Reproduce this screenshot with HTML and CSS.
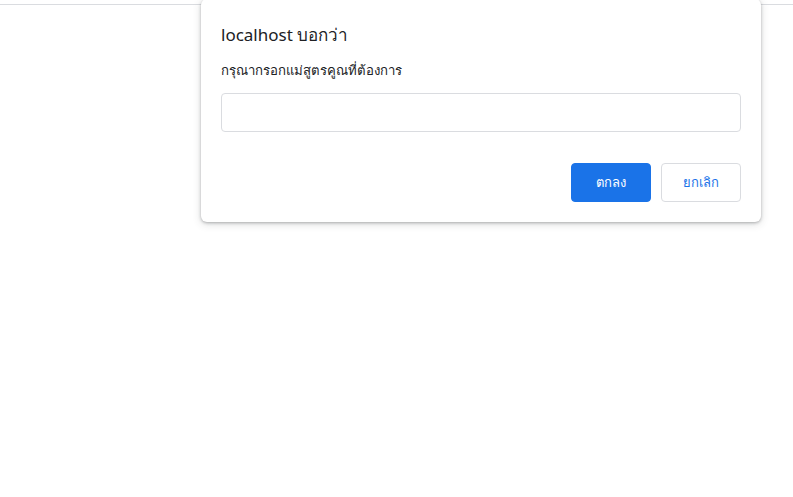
FILE: index.html
```html
<!DOCTYPE html>
<html lang="th">
<head>
<meta charset="utf-8">
<title>localhost</title>
<link rel="stylesheet" href="styles.css">
</head>
<body>
<div class="topbar"></div>
<div class="dialog" role="dialog">
  <div class="title">localhost บอกว่า</div>
  <div class="message">กรุณากรอกแม่สูตรคูณที่ต้องการ</div>
  <input class="field" type="text">
  <div class="actions">
    <button class="btn btn-primary">ตกลง</button>
    <button class="btn btn-secondary">ยกเลิก</button>
  </div>
</div>
</body>
</html>
```

FILE: styles.css
```css
html, body {
  margin: 0;
  padding: 0;
  background: #ffffff;
  font-family: "Noto Sans", "Open Sans", "DejaVu Sans", sans-serif;
  color: #202124;
}

.topbar {
  height: 4px;
  border-bottom: 1px solid #dadce0;
}

.dialog {
  position: absolute;
  left: 201px;
  top: -1px;
  width: 560px;
  height: 223px;
  box-sizing: border-box;
  background: #ffffff;
  border-radius: 6px;
  box-shadow: 0 1px 3px rgba(60, 64, 67, 0.35), 0 2px 8px rgba(60, 64, 67, 0.18);
  padding: 20px 20px 20px 20px;
  display: flex;
  flex-direction: column;
}

.title {
  font-size: 17px;
  line-height: 30px;
  margin-top: 1px;
  color: #202124;
}

.message {
  font-size: 13.2px;
  line-height: 20px;
  margin-top: 10px;
  color: #202124;
}

.field {
  margin-top: 13px;
  height: 39px;
  box-sizing: border-box;
  border: 1px solid #dadce0;
  border-radius: 4px;
  outline: none;
  background: #fff;
  padding: 0 8px;
  font-size: 13px;
}

.actions {
  margin-top: 31px;
  display: flex;
  justify-content: flex-end;
  gap: 10px;
}

.btn {
  width: 80px;
  height: 39px;
  border-radius: 4px;
  font-family: inherit;
  font-size: 13px;
  cursor: pointer;
}

.btn-primary {
  background: #1a73e8;
  color: #ffffff;
  border: 1px solid #1a73e8;
  font-weight: 500;
}

.btn-secondary {
  background: #ffffff;
  color: #1a73e8;
  border: 1px solid #dadce0;
}
```
